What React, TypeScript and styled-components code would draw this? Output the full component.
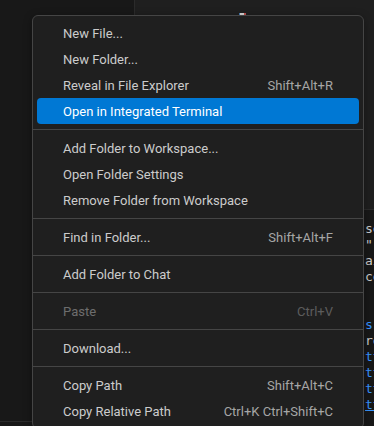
import React from 'react'
import styled, { createGlobalStyle } from 'styled-components'

const GlobalStyle = createGlobalStyle`
  html, body {
    margin: 0;
    padding: 0;
    background: #181818;
    overflow: hidden;
  }
  * { box-sizing: border-box; }
`

type Entry =
  | { kind: 'item'; label: string; keys?: string; active?: boolean; disabled?: boolean }
  | { kind: 'sep' }

const entries: Entry[] = [
  { kind: 'item', label: 'New File...' },
  { kind: 'item', label: 'New Folder...' },
  { kind: 'item', label: 'Reveal in File Explorer', keys: 'Shift+Alt+R' },
  { kind: 'item', label: 'Open in Integrated Terminal', active: true },
  { kind: 'sep' },
  { kind: 'item', label: 'Add Folder to Workspace...' },
  { kind: 'item', label: 'Open Folder Settings' },
  { kind: 'item', label: 'Remove Folder from Workspace' },
  { kind: 'sep' },
  { kind: 'item', label: 'Find in Folder...', keys: 'Shift+Alt+F' },
  { kind: 'sep' },
  { kind: 'item', label: 'Add Folder to Chat' },
  { kind: 'sep' },
  { kind: 'item', label: 'Paste', keys: 'Ctrl+V', disabled: true },
  { kind: 'sep' },
  { kind: 'item', label: 'Download...' },
  { kind: 'sep' },
  { kind: 'item', label: 'Copy Path', keys: 'Shift+Alt+C' },
  { kind: 'item', label: 'Copy Relative Path', keys: 'Ctrl+K Ctrl+Shift+C' },
]

// tail ends of the code lines peeking out right of the menu
const codeLines: { text: string; color: string; underline?: boolean }[] = [
  { text: 'so', color: '#cccccc' },
  { text: '", _', color: '#cccccc' },
  { text: 'ai', color: '#cccccc' },
  { text: 'co', color: '#cccccc' },
  { text: '', color: '#cccccc' },
  { text: '', color: '#cccccc' },
  { text: 's', color: '#3794ff' },
  { text: 'ro', color: '#cccccc' },
  { text: 'tt', color: '#3794ff' },
  { text: 'tt', color: '#3794ff' },
  { text: 'tt', color: '#3794ff' },
  { text: 'tt', color: '#3794ff', underline: true },
]

const App = () => {
  return (
    <Screen>
      <GlobalStyle />
      <Sidebar>
        <SidebarBody />
        <SidebarFooter />
      </Sidebar>
      <Editor>
        <TabStrip>
          <TabMark />
        </TabStrip>
        <EditorBody />
        <Panel>
          {codeLines.map((line, i) => (
            <CodeLine key={i} $color={line.color} $underline={line.underline}>
              {line.text}
            </CodeLine>
          ))}
        </Panel>
      </Editor>

      <Menu>
        {entries.map((e, i) =>
          e.kind === 'sep' ? (
            <Separator key={i} />
          ) : (
            <Item key={i} $active={e.active} $disabled={e.disabled}>
              <Label>{e.label}</Label>
              {e.keys && <Keys $active={e.active}>{e.keys}</Keys>}
            </Item>
          )
        )}
      </Menu>
    </Screen>
  )
}

export default App

const Screen = styled.div`
  position: relative;
  width: 374px;
  height: 426px;
  display: flex;
  overflow: hidden;
  font-family: 'Segoe UI', Roboto, 'Noto Sans', sans-serif;
`

const Sidebar = styled.div`
  width: 135px;
  flex-shrink: 0;
  display: flex;
  flex-direction: column;
  background: #181818;
  border-right: 1px solid #2b2b2b;
`

const SidebarBody = styled.div`
  height: 421px;
  flex-shrink: 0;
`

const SidebarFooter = styled.div`
  flex: 1;
  border-top: 1px solid #2b2b2b;
`

const Editor = styled.div`
  flex: 1;
  display: flex;
  flex-direction: column;
  background: #1f1f1f;
`

const TabStrip = styled.div`
  height: 16px;
  display: flex;
  align-items: flex-end;
  padding-left: 104px;
  padding-bottom: 1px;
`

const TabMark = styled.span`
  width: 7px;
  height: 2px;
  background: linear-gradient(90deg, #4a7bb0 0 20%, #d8d8d8 20% 75%, #c0504d 75%);
`

const EditorBody = styled.div`
  height: 193px;
  flex-shrink: 0;
  background: #1f1f1f;
`

const Panel = styled.div`
  flex: 1;
  background: #181818;
  border-top: 1px solid #2b2b2b;
  padding-top: 11px;
  padding-left: 230px;
  display: flex;
  flex-direction: column;
`

const CodeLine = styled.div<{ $color: string; $underline?: boolean }>`
  height: 16px;
  line-height: 16px;
  font-family: 'DejaVu Sans Mono', 'Liberation Mono', monospace;
  font-size: 13px;
  white-space: pre;
  color: ${p => p.$color};
  text-decoration: ${p => (p.$underline ? 'underline' : 'none')};
`

const Menu = styled.div`
  position: absolute;
  top: 15px;
  left: 32px;
  width: 332px;
  padding: 4px 0;
  background: #1f1f1f;
  border: 1px solid #454545;
  border-radius: 6px;
  box-shadow: 0 2px 8px rgba(0, 0, 0, 0.36);
  display: flex;
  flex-direction: column;
`

const Item = styled.div<{ $active?: boolean; $disabled?: boolean }>`
  height: 26px;
  margin: 0 4px;
  padding-top: 1px;
  display: flex;
  align-items: center;
  justify-content: space-between;
  border-radius: 4px;
  font-size: 13px;
  color: ${p => (p.$active ? '#ffffff' : '#cccccc')};
  background: ${p => (p.$active ? '#0078d4' : 'transparent')};
  opacity: ${p => (p.$disabled ? 0.45 : 1)};
`

const Label = styled.span`
  padding: 0 26px;
  white-space: nowrap;
`

const Keys = styled.span<{ $active?: boolean }>`
  padding: 0 26px;
  white-space: nowrap;
  color: ${p => (p.$active ? '#ffffff' : '#a6a6a6')};
`

const Separator = styled.div`
  height: 1px;
  margin: 5px 0;
  background: #454545;
`
